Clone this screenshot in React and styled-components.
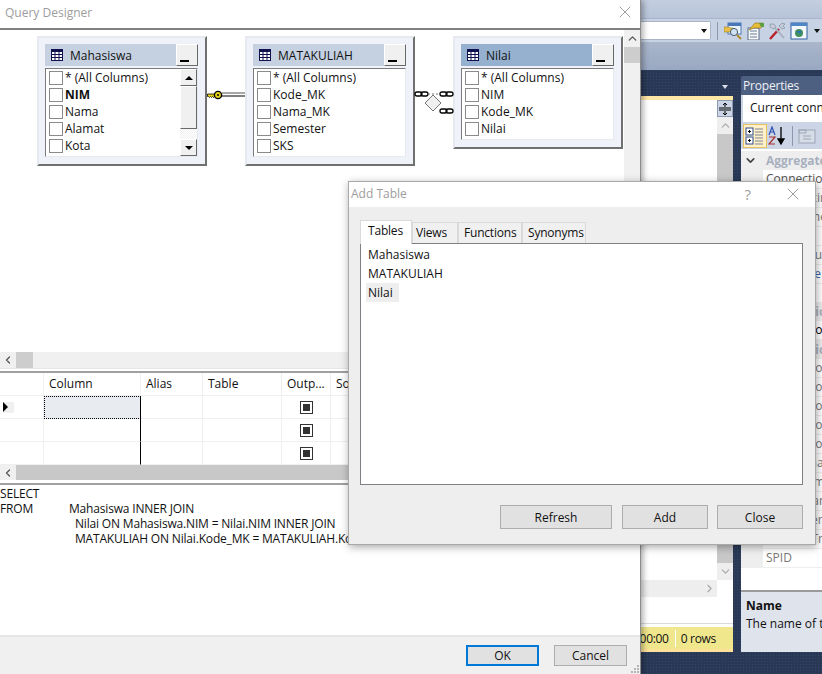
import React from "react";
import styled, { createGlobalStyle, css } from "styled-components";
import { X, ChevronLeft, ChevronRight, ChevronUp, ChevronDown } from "lucide-react";

const Global = createGlobalStyle`
  html, body { margin: 0; padding: 0; width: 822px; height: 674px; overflow: hidden; }
  body { font-family: "Open Sans", "Noto Sans", sans-serif; font-size: 12px; color: #111; }
  * { box-sizing: border-box; }
`;

const Page = styled.div`
  position: relative;
  width: 822px;
  height: 674px;
  overflow: hidden;
  background: #293955;
`;

/* ---------- the IDE behind the dialogs ---------- */
const Shell = styled.div`
  margin-left: 640px;
  width: 182px;
  height: 674px;
  display: flex;
  flex-direction: column;
  background-color: #293955;
  background-image: radial-gradient(#34476a 0.7px, transparent 0.8px);
  background-size: 3px 3px;
`;
const TitleStrip = styled.div`
  height: 18px;
  background: linear-gradient(#c3cee0, #b7c3d8);
`;
const Toolbar = styled.div`
  height: 24px;
  display: flex;
  align-items: center;
  background: #c7d3e4;
  border-top: 1px solid #a9b5ca;
`;
const Combo = styled.div`
  width: 71px;
  height: 19px;
  background: #fff;
  border: 1px solid #a9b4c6;
  border-left: 0;
  border-radius: 0 2px 2px 0;
  display: flex;
  align-items: center;
  justify-content: flex-end;
  padding-right: 3px;
`;
const Caret = styled.span`
  width: 0;
  height: 0;
  border-left: 3.5px solid transparent;
  border-right: 3.5px solid transparent;
  border-top: 4px solid ${(p) => p.$color || "#111"};
`;
const ToolSep = styled.span`
  width: 1px;
  height: ${(p) => p.$h || 18}px;
  margin: ${(p) => p.$m || "0 6px"};
  background: #8c99ad;
`;
const ToolIcon = styled.svg`
  width: ${(p) => p.$s || 18}px;
  height: ${(p) => p.$s || 18}px;
  margin-right: ${(p) => p.$gap ?? 4}px;
  flex: none;
  ${(p) => p.$on && css`background: #fff0c8; outline: 1px solid #e5c365;`}
`;
const TabBand = styled.div`
  height: 28px;
  background: linear-gradient(#a9b6cb, #99a8c1);
`;
const ShellBody = styled.div`
  flex: 1;
  display: flex;
  min-height: 0;
`;
const Well = styled.div`
  width: 93px;
  height: 582px;
  display: flex;
  flex-direction: column;
`;
const WellHead = styled.div`
  height: 26px;
  flex: none;
  display: flex;
  align-items: center;
  justify-content: flex-end;
  padding: 8px 5px 0 0;
`;
const DocFrame = styled.div`
  height: 556px;
  flex: none;
  background: #fff;
  border-top: 4px solid #ffe8a6;
  display: flex;
  flex-direction: column;
`;
const DocTop = styled.div`
  height: 480px;
  flex: none;
  display: flex;
  justify-content: flex-end;
`;
const DocScroll = styled.div`
  width: 16px;
  display: flex;
  flex-direction: column;
  background: #eeeeef;
`;
const Splitter = styled.div`
  height: 17px;
  display: flex;
  align-items: center;
  justify-content: center;
  background: #ccd5e6;
  border: 1px solid #8e9bb3;
`;
const ScrollEnd = styled.div`
  height: 17px;
  display: flex;
  align-items: center;
  justify-content: center;
  color: #a6a6a6;
`;
const ScrollTrack = styled.div`
  flex: 1;
  background: #c8c8c8;
`;
const DocHScroll = styled.div`
  height: 17px;
  flex: none;
  display: flex;
`;
const DocHTrack = styled.div`
  width: 77px;
  background: #eeeeef;
  display: flex;
  align-items: center;
  justify-content: flex-end;
  color: #a6a6a6;
  padding-right: 1px;
`;
const DocBlank = styled.div`
  flex: 1;
  border-bottom: 1px solid #d9d9d9;
  margin-bottom: 3px;
`;
const StatusBar = styled.div`
  height: 25px;
  flex: none;
  background: #f0e68c;
  border-bottom: 3px solid #ffe19a;
  display: flex;
  align-items: center;
  white-space: nowrap;
  overflow: hidden;
  justify-content: flex-end;
  padding-right: 17px;
  letter-spacing: -0.3px;
`;
const StatusCell = styled.span`
  padding: 0 6px 0 0;
  & + & { border-left: 1px solid #fff; padding-left: 5px; padding-right: 0; }
`;

const Props = styled.div`
  width: 81px;
  margin-left: 8px;
  margin-top: 6px;
  height: 576px;
  display: flex;
  flex-direction: column;
  overflow: hidden;
  white-space: nowrap;
`;
const PropsTitle = styled.div`
  height: 19px;
  flex: none;
  background: #4d6082;
  color: #eef1f6;
  padding-left: 2px;
  line-height: 20px;
  letter-spacing: -0.2px;
  border-radius: 2px 0 0 0;
`;
const PropsCombo = styled.div`
  height: 27px;
  flex: none;
  background: #fff;
  padding-left: 7px;
  line-height: 26px;
  border-left: 2px solid #ccd5e6;
`;
const PropsTools = styled.div`
  height: 27px;
  flex: none;
  background: #ccd5e6;
  display: flex;
  align-items: center;
  padding-left: 3px;
`;
const PropsGrid = styled.div`
  flex: 1;
  background: #fff;
  min-height: 0;
  overflow: hidden;
  padding-top: 2px;
`;
const PropRow = styled.div`
  height: 18.95px;
  display: flex;
  align-items: center;
  background: #eeeeef;
  color: ${(p) => (p.$head ? "#a8b0be" : p.$dim ? "#777" : "#111")};
  font-weight: ${(p) => (p.$head ? 700 : 400)};
`;
const RowChevron = styled(ChevronDown)`
  color: #444;
  margin: 0 9px 0 3px;
  flex: none;
`;
const PropLabel = styled.span`
  height: 100%;
  margin-left: 22px;
  padding-left: 3px;
  flex: 1;
  line-height: 18px;
  background: #fff;
  border-bottom: 1px solid #eee;
  color: ${(p) => p.$color || "inherit"};
`;
const PropsHelp = styled.div`
  height: 62px;
  flex: none;
  background: #dfe3ec;
  border-top: 2px solid #9a9a9a;
  padding: 5px 0 0 5px;
  line-height: 18px;
`;
const Bold = styled.div`
  font-weight: 700;
`;

/* ---------- query designer window ---------- */
const Win = styled.div`
  position: absolute;
  left: ${(p) => p.$x}px;
  top: ${(p) => p.$y}px;
  width: ${(p) => p.$w}px;
  height: ${(p) => p.$h}px;
  display: flex;
  flex-direction: column;
  overflow: hidden;
`;
const DesignerWin = styled(Win)`
  background: #fff;
  border-right: 1px solid #8c8c8c;
  box-shadow: 2px 0 6px rgba(0, 0, 0, 0.35);
  overflow: visible;
`;
const TitleBar = styled.div`
  height: ${(p) => p.$h}px;
  flex: none;
  background: #fff;
  display: flex;
  align-items: center;
  color: #9d9d9d;
  padding: 0 5px ${(p) => p.$under}px ${(p) => p.$pad}px;
`;
const TitleText = styled.span`
  flex: 1;
`;
const HelpMark = styled.span`
  color: #a0a0a0;
  font-size: 15px;
  margin-right: 32px;
`;
const CloseX = styled(X)`
  color: #8a8a8a;
  margin-right: ${(p) => p.$mr || 0}px;
`;
const DiagramPane = styled.div`
  height: 324px;
  flex: none;
  border-top: 2px solid #808080;
  display: flex;
`;
const Canvas = styled.div`
  position: relative;
  flex: 1;
  overflow: hidden;
`;
const VScroll = styled.div`
  width: 16px;
  background: #f0f0f0;
  display: flex;
  flex-direction: column;
  align-items: stretch;
  color: #555;
`;
const VArrow = styled.div`
  height: 17px;
  display: flex;
  align-items: center;
  justify-content: center;
`;
const VThumb = styled.div`
  height: 16px;
  background: #cdcdcd;
`;
const HScrollBar = styled.div`
  height: ${(p) => p.$h}px;
  flex: none;
  display: flex;
  align-items: center;
  background: ${(p) => p.$track};
`;
const HArrow = styled.div`
  width: 16px;
  height: 100%;
  flex: none;
  background: #f0f0f0;
  display: flex;
  align-items: center;
  justify-content: center;
  color: #555;
`;
const HThumb = styled.div`
  width: 17px;
  height: 100%;
  background: #cdcdcd;
`;
const PaneGap = styled.div`
  height: ${(p) => p.$h}px;
  flex: none;
  background: #fff;
  border-top: ${(p) => (p.$soft ? "1px solid #e6e6e6" : "0")};
  border-bottom: 2px solid #a0a0a0;
`;

const Node = styled.div`
  position: absolute;
  left: ${(p) => p.$x}px;
  top: ${(p) => p.$y}px;
  width: ${(p) => p.$w}px;
  height: ${(p) => p.$h}px;
  padding: 6px 7px 7px 6px;
  background: #eff3f9;
  border: 2px solid;
  border-color: #e6e9ee #707070 #707070 #e6e9ee;
  display: flex;
  flex-direction: column;
`;
const NodeHead = styled.div`
  height: 22px;
  flex: none;
  display: flex;
  align-items: center;
  background: ${(p) => (p.$active ? "#95b1cf" : "#c5d1e1")};
  padding-left: 6px;
`;
const NodeName = styled.span`
  flex: 1;
  margin-left: 7px;
`;
const MinBtn = styled.div`
  width: 22px;
  height: 22px;
  background: #f0f0f0;
  border: 1px solid;
  border-color: #fff #696969 #696969 #fff;
  position: relative;
  &::after {
    content: "";
    position: absolute;
    left: 3px;
    bottom: 3px;
    width: 9px;
    height: 2px;
    background: #000;
  }
`;
const NodeBody = styled.div`
  flex: 1;
  min-height: 0;
  margin-top: 2px;
  background: #fff;
  border: 1px solid;
  border-color: #7b7b7b #e6e9ee #e6e9ee #7b7b7b;
  display: flex;
  overflow: hidden;
`;
const ColList = styled.div`
  flex: 1;
  padding: 0 0 0 3px;
`;
const ColRow = styled.div`
  height: 17px;
  display: flex;
  align-items: center;
  font-weight: ${(p) => (p.$key ? 700 : 400)};
`;
const Check = styled.span`
  width: 14px;
  height: 14px;
  flex: none;
  margin-right: 2px;
  border: 1px solid #8a8a8a;
  background: #fff;
`;
const NodeScroll = styled.div`
  width: 17px;
  flex: none;
  display: flex;
  flex-direction: column;
  background: repeating-conic-gradient(#f0f0f0 0 25%, #fff 0 50%) 0 0 / 2px 2px;
`;
const NodeBtn = styled.div`
  height: ${(p) => p.$h}px;
  flex: none;
  background: #f0f0f0;
  border: 1px solid;
  border-color: #fff #696969 #696969 #fff;
  display: flex;
  align-items: center;
  justify-content: center;
`;
const NodeSpace = styled.div`
  flex: 1;
`;
const TableIcon = () => (
  <svg width="12" height="12" viewBox="0 0 12 12">
    <rect x="0.5" y="0.5" width="11" height="11" fill="#fff" stroke="#101050" />
    <rect x="0.5" y="0.5" width="11" height="2.5" fill="#101050" />
    <path d="M4 3v8M8 3v8M1 5.5h10M1 8.5h10" stroke="#101050" strokeWidth="1" />
  </svg>
);
const Triangle = styled.span`
  width: 0;
  height: 0;
  border-left: 4px solid transparent;
  border-right: 4px solid transparent;
  ${(p) =>
    p.$up
      ? css`border-bottom: 4px solid #000;`
      : css`border-top: 4px solid #000;`}
`;
const Link = styled.svg`
  position: absolute;
  left: 0;
  top: 0;
`;

/* ---------- criteria grid ---------- */
const Grid = styled.div`
  height: 92px;
  flex: none;
  display: grid;
  grid-template-columns: 44px 97px 62px 79px 49px 1fr;
  grid-template-rows: 23px 23px 23px 23px;
  overflow: hidden;
`;
const Cell = styled.div`
  border-right: 1px solid #efefef;
  border-bottom: 1px solid #efefef;
  display: flex;
  align-items: center;
  justify-content: ${(p) => (p.$center ? "center" : "flex-start")};
  padding: 0 0 ${(p) => (p.$head ? 2 : 0)}px ${(p) => (p.$head ? 5 : 0)}px;
  white-space: nowrap;
  ${(p) => p.$bold && css`border-right: 1px solid #000;`}
  ${(p) =>
    p.$sel &&
    css`
      background: #e8ecf0;
      border: 1px dotted #000;
      border-right: 1px solid #000;
    `}
`;
const RowMark = styled.span`
  width: 11px;
  height: 11px;
  margin-left: 3px;
  background: #f0f0f0;
  display: flex;
  align-items: center;
  &::before {
    content: "";
    border-left: 5px solid #000;
    border-top: 5px solid transparent;
    border-bottom: 5px solid transparent;
  }
`;
const OutBox = styled.span`
  width: 13px;
  height: 13px;
  border: 1px solid #333;
  display: flex;
  align-items: center;
  justify-content: center;
  &::after {
    content: "";
    width: 7px;
    height: 7px;
    background: #333;
  }
`;
const Sql = styled.div`
  flex: 1;
  padding: 1px 0 0 0;
  line-height: 15px;
  letter-spacing: -0.18px;
  white-space: pre;
  overflow: hidden;
`;
const SqlLine = styled.div`
  padding-left: ${(p) => p.$in || 0}px;
  display: flex;
`;
const SqlKey = styled.span`
  width: ${(p) => p.$w}px;
`;
const Footer = styled.div`
  height: 39px;
  flex: none;
  border-top: 2px solid #e6e6e6;
  background: #f0f0f0;
  display: flex;
  align-items: flex-start;
  justify-content: flex-end;
  gap: 15px;
  padding: 8px 13px 0 0;
  position: relative;
`;
const Btn = styled.button`
  width: ${(p) => p.$w}px;
  height: ${(p) => p.$h || 24}px;
  font: inherit;
  color: #111;
  background: #e1e1e1;
  border: ${(p) => (p.$primary ? "2px solid #0078d7" : "1px solid #adadad")};
  padding: 0;
`;
const Grip = styled.svg`
  position: absolute;
  right: 1px;
  bottom: 1px;
`;

/* ---------- add table dialog ---------- */
const AddWin = styled(Win)`
  background: #eeeeee;
  border: 1px solid #a9a9a9;
  box-shadow: 1px 2px 8px rgba(0, 0, 0, 0.35);
`;
const DialogBody = styled.div`
  flex: 1;
  display: flex;
  flex-direction: column;
  padding: 13px 12px 14px 11px;
`;
const Tabs = styled.div`
  height: 23px;
  flex: none;
  display: flex;
  align-items: flex-end;
`;
const Tab = styled.div`
  width: ${(p) => p.$w}px;
  height: ${(p) => (p.$active ? 24 : 21)}px;
  background: ${(p) => (p.$active ? "#fff" : "#f0f0f0")};
  border: 1px solid #d9d9d9;
  border-bottom: 0;
  padding-left: ${(p) => p.$pad}px;
  line-height: 20px;
  letter-spacing: -0.2px;
  white-space: nowrap;
  margin-bottom: ${(p) => (p.$active ? -1 : 0)}px;
  position: relative;
  z-index: ${(p) => (p.$active ? 1 : 0)};
`;
const ListBox = styled.div`
  height: 242px;
  flex: none;
  background: #fff;
  border: 1px solid #7f7f86;
  padding: 1px 5px;
  display: flex;
  flex-direction: column;
  align-items: flex-start;
`;
const ListItem = styled.div`
  height: 19px;
  line-height: 19px;
  padding: 0 ${(p) => (p.$sel ? 6 : 2)}px 0 2px;
  background: ${(p) => (p.$sel ? "#eeeeee" : "transparent")};
`;
const DialogActions = styled.div`
  margin-top: 20px;
  display: flex;
  justify-content: flex-end;
  gap: 9px;
  & > :first-child { margin-right: 1px; }
`;

const columns = {
  m: ["* (All Columns)", "NIM", "Nama", "Alamat", "Kota", ""],
  k: ["* (All Columns)", "Kode_MK", "Nama_MK", "Semester", "SKS"],
  n: ["* (All Columns)", "NIM", "Kode_MK", "Nilai"],
};

const TableNode = ({ x, y, w, h, name, cols, active, keyCol, scroll }) => (
  <Node $x={x} $y={y} $w={w} $h={h}>
    <NodeHead $active={active}>
      <TableIcon />
      <NodeName>{name}</NodeName>
      <MinBtn />
    </NodeHead>
    <NodeBody>
      <ColList>
        {cols.map((c, i) => (
          <ColRow key={i} $key={c === keyCol}>
            <Check />
            {c}
          </ColRow>
        ))}
      </ColList>
      {scroll && (
        <NodeScroll>
          <NodeBtn $h={17}><Triangle $up /></NodeBtn>
          <NodeBtn $h={43} />
          <NodeSpace />
          <NodeBtn $h={17}><Triangle /></NodeBtn>
        </NodeScroll>
      )}
    </NodeBody>
  </Node>
);

const Chain = ({ x, y }) => (
  <g fill="none" stroke="#000" strokeWidth="1.3">
    <rect x={x} y={y - 2} width="7" height="4" rx="2" />
    <rect x={x + 6} y={y - 2} width="7" height="4" rx="2" />
  </g>
);

const propRows = [
  { t: "Aggregate Status", head: true },
  { t: "Connection failures", c: "#555" },
  { t: "Elapsed time", dim: true },
  { t: "Finish time", dim: true },
  { t: "Name", dim: true },
  { t: "Rows returned", dim: true },
  { t: "Start time", c: "#3b5fa8" },
  { t: "State", dim: true },
  { t: "Connection", head: true },
  { t: "Connection name", c: "#000" },
  { t: "Connection Details", head: true },
  { t: "Connection elapsed time", dim: true },
  { t: "Connection finish time", dim: true },
  { t: "Connection rows returned", dim: true },
  { t: "Connection start time", dim: true },
  { t: "Connection state", dim: true },
  { t: "Display name", dim: true },
  { t: "Login name", dim: true },
  { t: "Server name", dim: true },
  { t: "Server version", dim: true },
  { t: "Session Tracing ID", dim: true },
  { t: "SPID", dim: true },
];

export default function App() {
  return (
    <Page>
      <Global />
      <Shell>
        <TitleStrip />
        <Toolbar>
          <Combo><Caret /></Combo>
          <ToolSep />
          <ToolIcon viewBox="0 0 18 18">
            <rect x="4" y="1" width="13" height="11" fill="#eef4fb" stroke="#4a78b8" />
            <rect x="4" y="1" width="13" height="3" fill="#4a78b8" />
            <path d="M0 5h5l1 1h3v4H0z" fill="#e8c04a" stroke="#9a7a20" strokeWidth=".6" />
            <circle cx="10" cy="10" r="3.6" fill="#cfe3f5" stroke="#4b5a6b" />
            <path d="M13 13l4 4" stroke="#b08a30" strokeWidth="2" />
          </ToolIcon>
          <ToolIcon viewBox="0 0 18 18">
            <rect x="2" y="6" width="11" height="12" fill="#f7f9fc" stroke="#5a6a85" />
            <path d="M4 9h7M4 12h7M4 15h7" stroke="#6b7a95" />
            <path d="M3 8L9 1h8l-2 5H8z" fill="#e8bd3a" stroke="#8a6a10" strokeWidth=".6" />
            <path d="M13 1h5v4h-3z" fill="#5aa040" />
          </ToolIcon>
          <ToolIcon viewBox="0 0 18 18">
            <path d="M2 17L11 7" stroke="#b8202a" strokeWidth="2.4" />
            <path d="M16 16L7 6" stroke="#aab3c0" strokeWidth="2" />
            <path d="M2 2l4 0 2 3-3 2-3-2zM11 4l3-3 3 1-2 2 2 2-3 1z" fill="#c3ccd8" stroke="#7a8798" strokeWidth=".6" />
          </ToolIcon>
          <ToolIcon viewBox="0 0 18 18" $gap={6}>
            <rect x="1" y="1" width="16" height="16" fill="#f3f7fc" stroke="#2f5f9f" />
            <rect x="1" y="1" width="16" height="3" fill="#4f86c6" />
            <circle cx="9" cy="11" r="4" fill="#3f8f5f" />
            <path d="M7 9h4v2H8z" fill="#2f6fbf" />
          </ToolIcon>
          <Caret />
        </Toolbar>
        <TabBand />
        <ShellBody>
          <Well>
            <WellHead><Caret $color="#d9dfe9" /></WellHead>
            <DocFrame>
              <DocTop>
                <DocScroll>
                  <Splitter>
                    <svg width="12" height="12" viewBox="0 0 12 12">
                      <path d="M0 5h12M0 7h12M6 0v4M6 8v4M4 2l2-2 2 2M4 10l2 2 2-2" stroke="#000" fill="none" />
                    </svg>
                  </Splitter>
                  <ScrollEnd><ChevronUp size={13} /></ScrollEnd>
                  <ScrollTrack />
                  <ScrollEnd><ChevronDown size={13} /></ScrollEnd>
                </DocScroll>
              </DocTop>
              <DocHScroll>
                <DocHTrack><ChevronRight size={13} /></DocHTrack>
              </DocHScroll>
              <DocBlank />
              <StatusBar>
                <StatusCell>00:00:00</StatusCell>
                <StatusCell>0 rows</StatusCell>
              </StatusBar>
            </DocFrame>
          </Well>
          <Props>
            <PropsTitle>Properties</PropsTitle>
            <PropsCombo>Current connection parameters</PropsCombo>
            <PropsTools>
              <ToolIcon viewBox="0 0 22 22" $s={22} $on $gap={2}>
                <rect x="2" y="3" width="7" height="7" fill="#fff" stroke="#2b4a8a" />
                <rect x="2" y="12" width="7" height="7" fill="#fff" stroke="#2b4a8a" />
                <path d="M4 6.500h3M5.500 5v3M4 15.500h3M5.500 14v3" stroke="#000" />
                <path d="M11 4h8M11 7h8M11 10h8M11 13h8M11 16h8M11 19h8" stroke="#7a8599" />
              </ToolIcon>
              <ToolIcon viewBox="0 0 20 20" $s={20} $gap={4}>
                <path d="M1 9l3-8 3 8M2 6h4" stroke="#2a50b0" fill="none" strokeWidth="1.2" />
                <path d="M1 11h6L1 18h6" stroke="#a83030" fill="none" strokeWidth="1.2" />
                <path d="M13 1v16M10 13l3 5 3-5z" stroke="#000" strokeWidth="1.3" fill="#000" />
              </ToolIcon>
              <ToolSep $h={20} $m="0 5px 0 0" />
              <ToolIcon viewBox="0 0 18 18" $gap={0}>
                <rect x="1" y="3" width="16" height="13" fill="#d7dde7" stroke="#9aa5b6" />
                <path d="M1 3h7v3H1zM5 9h8M5 12h8" stroke="#9aa5b6" fill="none" />
              </ToolIcon>
            </PropsTools>
            <PropsGrid>
              {propRows.map((r) =>
                r.head ? (
                  <PropRow key={r.t} $head><RowChevron size={13} strokeWidth={3} />{r.t}</PropRow>
                ) : (
                  <PropRow key={r.t} $dim={r.dim}>
                    <PropLabel $color={r.c}>{r.t}</PropLabel>
                  </PropRow>
                )
              )}
            </PropsGrid>
            <PropsHelp>
              <Bold>Name</Bold>
              The name of the connection.
            </PropsHelp>
          </Props>
        </ShellBody>
      </Shell>

      <DesignerWin $x={0} $y={0} $w={641} $h={674}>
        <TitleBar $h={28} $pad={5} $under={4}>
          <TitleText>Query Designer</TitleText>
          <CloseX size={20} strokeWidth={1} />
        </TitleBar>
        <DiagramPane>
          <Canvas>
            <TableNode x={37} y={6} w={170} h={130} name="Mahasiswa" cols={columns.m} keyCol="NIM" scroll />
            <TableNode x={245} y={6} w={170} h={130} name="MATAKULIAH" cols={columns.k} />
            <TableNode x={453} y={6} w={170} h={113} name="Nilai" cols={columns.n} active />
            <Link width="624" height="130" viewBox="0 0 624 130">
              <path d="M222 63h23" stroke="#a8a8a8" strokeWidth="2" />
              <path d="M222 66h23" stroke="#000" />
              <path d="M207.500 64h9v2.500h-2l-1 1-1-1-1 1-1-1-1 1-1-1h-1z" fill="#e6d21e" stroke="#000" strokeWidth=".8" />
              <circle cx="218" cy="65" r="3.600" fill="#e6d21e" stroke="#000" strokeWidth="1.400" />
              <circle cx="218" cy="65" r="1" fill="#000" />
              <Chain x={415} y={64} />
              <path d="M428 64h12" stroke="#777" strokeDasharray="2 2" />
              <Chain x={440} y={64} />
              <Chain x={440} y={81} />
              <path d="M433 65l8 8-8 8-8-8z" fill="#f0f0f0" stroke="#777" />
            </Link>
          </Canvas>
          <VScroll>
            <VArrow><ChevronUp size={13} strokeWidth={2.4} /></VArrow>
            <VThumb />
          </VScroll>
        </DiagramPane>
        <HScrollBar $h={16} $track="#f0f0f0">
          <HArrow><ChevronLeft size={12} strokeWidth={2.6} /></HArrow>
          <HThumb />
        </HScrollBar>
        <PaneGap $h={5} $soft />
        <Grid>
          <Cell />
          <Cell $head>Column</Cell>
          <Cell $head>Alias</Cell>
          <Cell $head>Table</Cell>
          <Cell $head>Outp...</Cell>
          <Cell $head>Sort Type</Cell>
          <Cell><RowMark /></Cell>
          <Cell $sel />
          <Cell />
          <Cell />
          <Cell $center><OutBox /></Cell>
          <Cell />
          <Cell />
          <Cell $bold />
          <Cell />
          <Cell />
          <Cell $center><OutBox /></Cell>
          <Cell />
          <Cell />
          <Cell $bold />
          <Cell />
          <Cell />
          <Cell $center><OutBox /></Cell>
          <Cell />
        </Grid>
        <HScrollBar $h={15} $track="#c8c8c8">
          <HArrow><ChevronLeft size={12} strokeWidth={2.6} /></HArrow>
        </HScrollBar>
        <PaneGap $h={5} />
        <Sql>
          <SqlLine>SELECT</SqlLine>
          <SqlLine><SqlKey $w={69}>FROM</SqlKey>Mahasiswa INNER JOIN</SqlLine>
          <SqlLine $in={75}>Nilai ON Mahasiswa.NIM = Nilai.NIM INNER JOIN</SqlLine>
          <SqlLine $in={75}>MATAKULIAH ON Nilai.Kode_MK = MATAKULIAH.Kode_MK</SqlLine>
        </Sql>
        <Footer>
          <Btn $w={73} $h={21} $primary>OK</Btn>
          <Btn $w={73} $h={21}>Cancel</Btn>
          <Grip width="10" height="10" viewBox="0 0 10 10">
            <path d="M8 2h2v2H8zM5 5h2v2H5zM8 5h2v2H8zM2 8h2v2H2zM5 8h2v2H5zM8 8h2v2H8z" fill="#b5b5b5" />
          </Grip>
        </Footer>
      </DesignerWin>

      <AddWin $x={348} $y={181} $w={468} $h={364}>
        <TitleBar $h={25} $pad={2} $under={2}>
          <TitleText>Add Table</TitleText>
          <HelpMark>?</HelpMark>
          <CloseX size={20} strokeWidth={1} $mr={7} />
        </TitleBar>
        <DialogBody>
          <Tabs>
            <Tab $w={52} $active $pad={7}>Tables</Tab>
            <Tab $w={46} $pad={3}>Views</Tab>
            <Tab $w={64} $pad={5}>Functions</Tab>
            <Tab $w={64} $pad={5}>Synonyms</Tab>
          </Tabs>
          <ListBox>
            <ListItem>Mahasiswa</ListItem>
            <ListItem>MATAKULIAH</ListItem>
            <ListItem $sel>Nilai</ListItem>
          </ListBox>
          <DialogActions>
            <Btn $w={112}>Refresh</Btn>
            <Btn $w={86}>Add</Btn>
            <Btn $w={86}>Close</Btn>
          </DialogActions>
        </DialogBody>
      </AddWin>
    </Page>
  );
}
